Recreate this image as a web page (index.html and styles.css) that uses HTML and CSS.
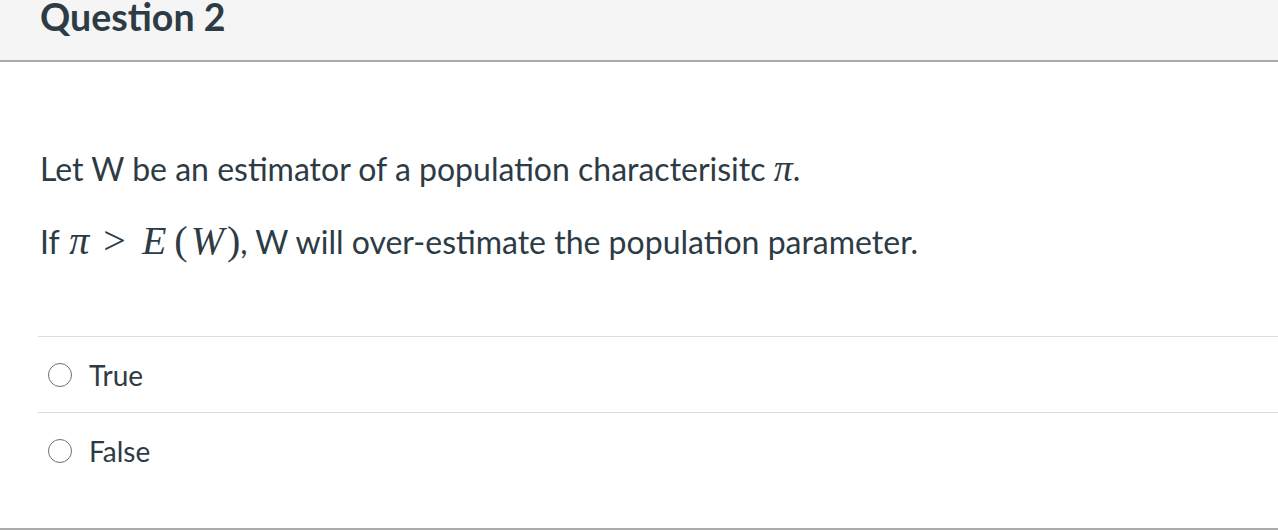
FILE: index.html
```html
<!DOCTYPE html>
<html>
<head>
<meta charset="utf-8">
<link rel="stylesheet" href="styles.css">
</head>
<body>
<div class="question">
  <div class="header"><h2 class="title">Question 2</h2></div>
  <div class="content">
    <div class="text">
      <p class="para">Let W be an estimator of a population characterisitc <span class="mi">π</span>.</p>
      <p class="para">If <span class="math"><span class="mi">π</span><span class="mo">&gt;</span><span class="mi">E</span><span class="paren open">(</span><span class="mi">W</span><span class="paren close">)</span></span>, W will over-estimate the population parameter.</p>
    </div>
    <div class="answers">
      <div class="answer"><span class="radio"></span><span class="label">True</span></div>
      <div class="answer"><span class="radio"></span><span class="label">False</span></div>
    </div>
  </div>
</div>
</body>
</html>
```
FILE: styles.css
```css
html, body {
  margin: 0;
  padding: 0;
  background: #fff;
}
body {
  font-family: Lato, "Liberation Sans", sans-serif;
  color: #2d3b45;
  width: 1278px;
  height: 530px;
  overflow: hidden;
}
.question {
  border-bottom: 2px solid #aaaaaa;
  height: 528px;
}
.header {
  background: #f5f5f5;
  height: 60px;
  border-bottom: 2px solid #aaaaaa;
  padding-left: 40px;
  overflow: hidden;
}
.title {
  margin: 0;
  font-size: 37.5px;
  font-weight: 700;
  line-height: 34px;
}
.content {
  padding-left: 38px;
}
.text {
  padding-top: 84px;
  padding-left: 2px;
}
.para {
  margin: 0 0 28px 0;
  font-size: 32px;
  line-height: 44px;
}
.math {
  font-family: "Liberation Serif", "DejaVu Serif", serif;
  font-size: 40px;
  margin-left: 2px;
}
.para > .mi {
  font-size: 38px;
}
.mi {
  font-family: "Liberation Serif", "DejaVu Serif", serif;
  font-style: italic;
}
.math .mi {
  font-size: 40px;
}
.mo {
  margin: 0 16px 0 14px;
}
.paren.open {
  margin-left: 8px;
  margin-right: 3px;
}
.paren.close {
  margin-left: 3px;
}
.answers {
  margin-top: 72px;
}
.answer {
  border-top: 1px solid #dddddd;
  height: 75px;
  display: flex;
  align-items: center;
  padding-left: 10px;
  gap: 17px;
}
.radio {
  width: 22px;
  height: 22px;
  border: 1.5px solid #6f6f6f;
  border-radius: 50%;
}
.label {
  font-size: 28px;
}
```
